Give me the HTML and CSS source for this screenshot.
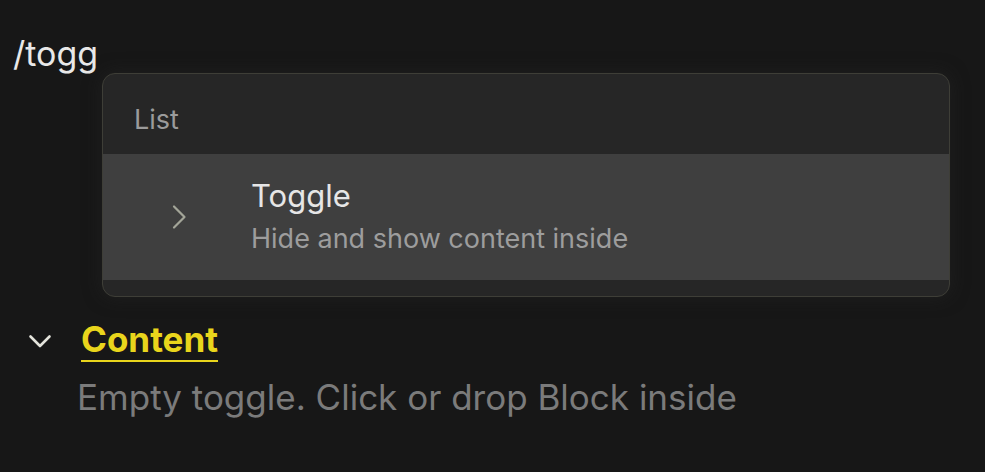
FILE: index.html
```html
<!DOCTYPE html>
<html>
<head>
<meta charset="utf-8">
<link rel="stylesheet" href="styles.css">
</head>
<body>
<div class="editor">
  <div class="slash-line">/togg</div>
  <div class="menu">
    <div class="menu-group">List</div>
    <div class="menu-item">
      <div class="item-icon">
        <svg width="16" height="28" viewBox="0 0 16 28"><path d="M3 3.5 L13.5 14 L3 24.5" fill="none" stroke="#a3a598" stroke-width="2.2" stroke-linecap="round" stroke-linejoin="round"/></svg>
      </div>
      <div class="item-text">
        <div class="item-title">Toggle</div>
        <div class="item-desc">Hide and show content inside</div>
      </div>
    </div>
  </div>
  <div class="toggle-block">
    <div class="toggle-head">
      <span class="toggle-arrow">
        <svg width="24" height="16" viewBox="0 0 24 16"><path d="M2.5 2.5 L12 12 L21.5 2.5" fill="none" stroke="#e4e4dc" stroke-width="2.6" stroke-linecap="round" stroke-linejoin="round"/></svg>
      </span>
      <span class="toggle-title">Content</span>
    </div>
    <div class="toggle-empty">Empty toggle. Click or drop Block inside</div>
  </div>
</div>
</body>
</html>
```

FILE: styles.css
```css
html, body {
  margin: 0;
  padding: 0;
  background: #171717;
  height: 100%;
}
body {
  font-family: "Inter", "Noto Sans", sans-serif;
  color: #e6e6e6;
}
.editor {
  position: relative;
  padding: 32px 0 0 13px;
}
.slash-line {
  font-size: 34px;
  line-height: 44px;
  color: #e8e8e8;
}
.menu {
  position: absolute;
  left: 102px;
  top: 73px;
  width: 846px;
  background: #262626;
  border: 1px solid #3e3e37;
  border-radius: 13px;
  box-shadow: 0 0 18px rgba(40, 40, 40, 0.5);
  padding-bottom: 16px;
  overflow: hidden;
}
.menu-group {
  height: 80px;
  box-sizing: border-box;
  padding: 30px 0 0 31px;
  font-size: 27px;
  line-height: 32px;
  color: #9b9b9b;
}
.menu-item {
  display: flex;
  align-items: center;
  height: 126px;
  background: #3f3f3f;
}
.item-icon {
  width: 148px;
  display: flex;
  justify-content: center;
  padding-left: 4px;
  box-sizing: border-box;
}
.item-text {
  display: flex;
  flex-direction: column;
}
.item-title {
  font-size: 31px;
  line-height: 38px;
  color: #e6e6e6;
}
.item-desc {
  margin-top: 6px;
  font-size: 27px;
  line-height: 36px;
  color: #9d9d9d;
}
.toggle-block {
  margin-top: 243px;
}
.toggle-head {
  display: flex;
  align-items: center;
  height: 46px;
}
.toggle-arrow {
  width: 68px;
  display: flex;
  padding-left: 15px;
  box-sizing: border-box;
}
.toggle-title {
  font-size: 35px;
  font-weight: 700;
  color: #e9d51c;
  border-bottom: 2px solid #e9d51c;
  line-height: 34px;
  padding-bottom: 4px;
}
.toggle-empty {
  margin-top: 10px;
  padding-left: 64px;
  font-size: 35px;
  line-height: 44px;
  color: #7b7b7b;
}
```
